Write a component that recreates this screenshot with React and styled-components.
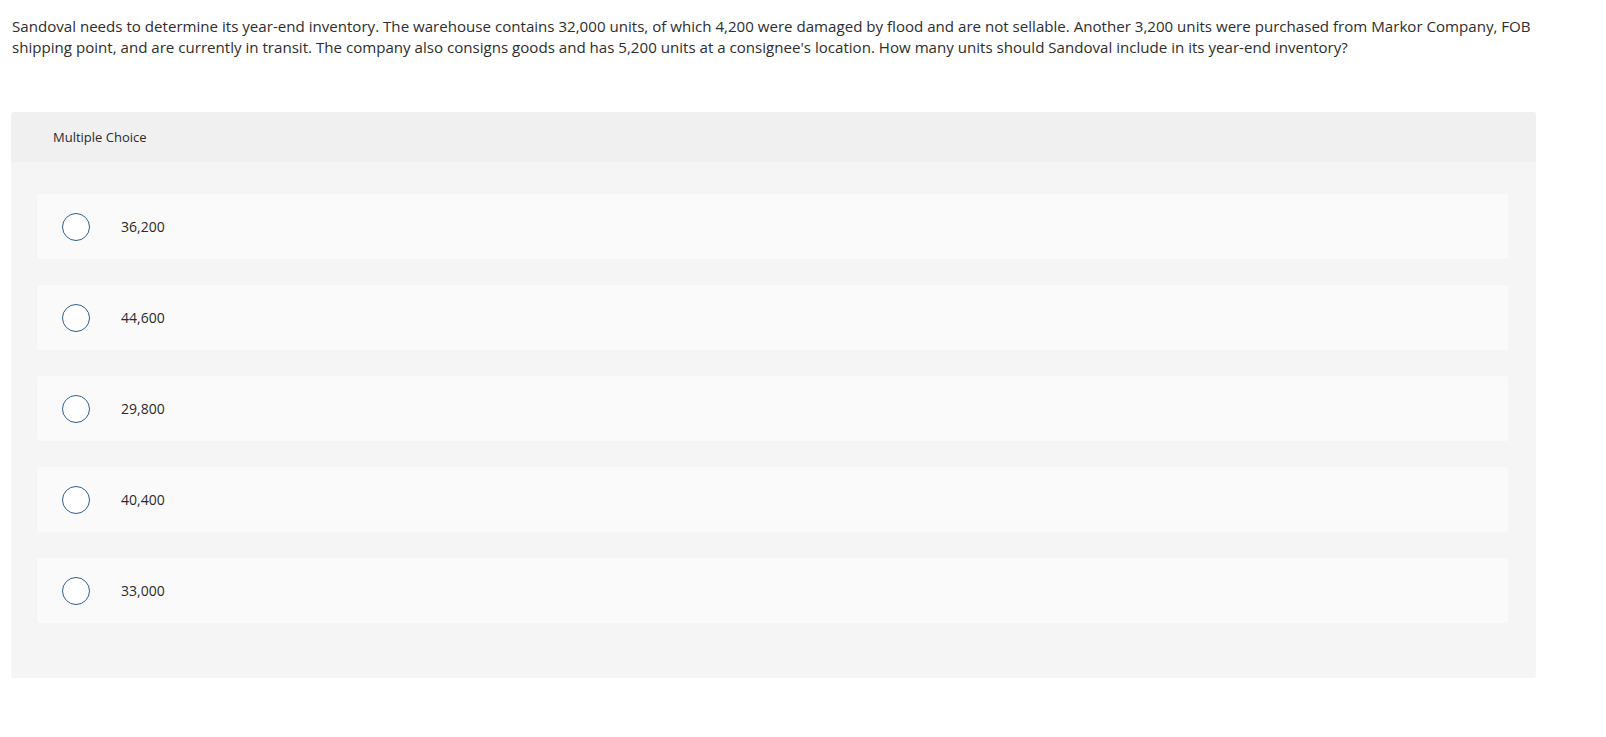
import React from "react";
import styled, { createGlobalStyle } from "styled-components";

const Global = createGlobalStyle`
  html, body { margin: 0; padding: 0; background: #fff; }
  body { font-family: "Open Sans", Lato, sans-serif; color: #2b2b2b; }
`;

const Page = styled.div`
  padding: 0 70px 0 11px;
`;

const Question = styled.p`
  margin: 0;
  padding: 16px 0 0 1px;
  font-size: 15.1px;
  line-height: 21px;
  color: #2d2d2d;
`;

const Panel = styled.section`
  margin-top: 54px;
  width: 1525px;
  background: #f5f5f5;
  border-radius: 3px;
  overflow: hidden;
`;

const Header = styled.div`
  height: 50px;
  background: #f0f0f0;
  display: flex;
  align-items: center;
  padding-left: 42px;
  font-size: 13px;
  color: #2b2b2b;
`;

const Body = styled.div`
  display: flex;
  flex-direction: column;
  gap: 26px;
  padding: 32px 28px 55px 26px;
`;

const Option = styled.label`
  height: 65px;
  background: #fafafa;
  border-radius: 2px;
  display: flex;
  align-items: center;
  padding-left: 25px;
  cursor: pointer;
`;

const Radio = styled.span`
  width: 26px;
  height: 26px;
  border: 1.5px solid #2e5f8f;
  border-radius: 50%;
  background: #fff;
  flex: none;
`;

const Value = styled.span`
  margin-left: 31px;
  font-size: 14px;
  color: #2b2b2b;
`;

const choices = ["36,200", "44,600", "29,800", "40,400", "33,000"];

export default function App() {
  return (
    <Page>
      <Global />
      <Question>
        Sandoval needs to determine its year-end inventory. The warehouse contains 32,000 units, of which 4,200 were damaged by flood and are not sellable. Another 3,200 units were purchased from Markor Company, FOB shipping point, and are currently in transit. The company also consigns goods and has 5,200 units at a consignee's location. How many units should Sandoval include in its year-end inventory?
      </Question>
      <Panel>
        <Header>Multiple Choice</Header>
        <Body>
          {choices.map((c) => (
            <Option key={c}>
              <Radio />
              <Value>{c}</Value>
            </Option>
          ))}
        </Body>
      </Panel>
    </Page>
  );
}
